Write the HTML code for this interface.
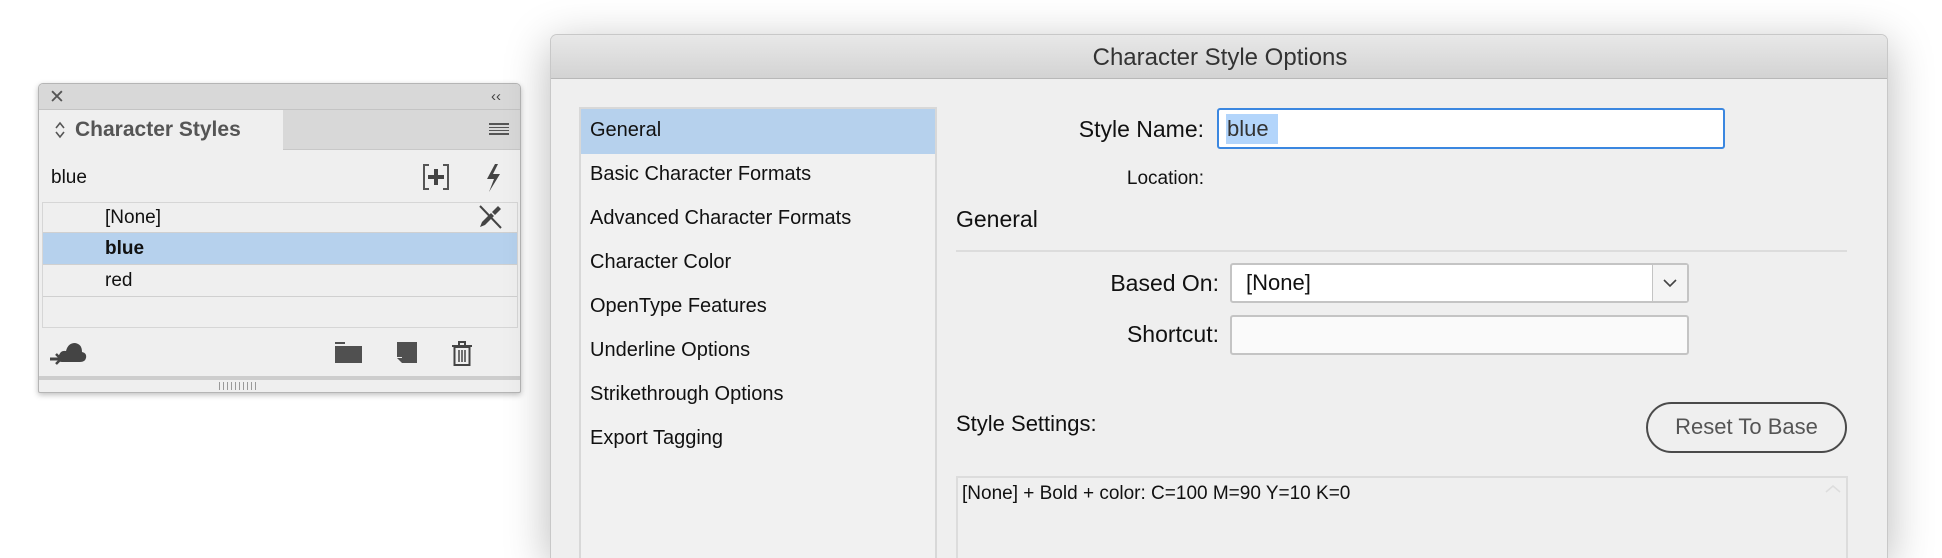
<!DOCTYPE html>
<html><head><style>
*{margin:0;padding:0;box-sizing:border-box}
body{width:1942px;height:558px;background:#fff;position:relative;overflow:hidden;font-family:"Liberation Sans",sans-serif;color:#111}
.a{position:absolute}
.t{position:absolute;white-space:nowrap;line-height:1}
</style></head><body>

<!-- Panel -->
<div class="a" style="left:38px;top:83px;width:483px;height:310px;background:#efefef;border:1px solid #b5b5b5;border-radius:5px 5px 2px 2px;box-shadow:0 2px 6px rgba(0,0,0,.25);overflow:hidden">
  <div class="a" style="left:0;top:0;width:483px;height:26px;background:#d8d8d8;border-bottom:1px solid #c4c4c4"></div>
  <div class="t" style="left:10px;top:4px;font-size:19px;color:#555">✕</div>
  <div class="t" style="left:452px;top:5px;font-size:15px;color:#444">‹‹</div>
  <div class="a" style="left:0;top:26px;width:483px;height:40px;background:#d8d8d8;border-bottom:1px solid #c8c8c8"></div>
  <div class="a" style="left:0;top:26px;width:244px;height:41px;background:#efefef"></div>
  <svg class="a" style="left:15px;top:37px" width="12" height="18"><path d="M2 7 L6 2 L10 7 M2 11 L6 16 L10 11" stroke="#555" stroke-width="1.6" fill="none"/></svg>
  <div class="t" style="left:36px;top:35px;font-size:21px;font-weight:bold;color:#555">Character Styles</div>
  <div class="a" style="left:450px;top:39px;width:20px;height:12px;border-top:2px solid #555;border-bottom:2px solid #555"></div>
  <div class="a" style="left:450px;top:43px;width:20px;height:4px;border-top:1.5px solid #555;border-bottom:1.5px solid #555"></div>
  <div class="t" style="left:12px;top:84px;font-size:19px">blue</div>
  <svg class="a" style="left:384px;top:80px" width="26" height="26"><path d="M6 1H1V25H6M20 1H25V25H20" stroke="#555" stroke-width="2" fill="none"/><path d="M13 5V21M5 13H21" stroke="#444" stroke-width="4"/></svg>
  <svg class="a" style="left:443px;top:79px" width="22" height="30"><path d="M13 1 L5 16 L12 16 L7 29 L18 11 L11 11 L16 1" fill="#444"/></svg>
  <div class="a" style="left:3px;top:118px;width:476px;height:126px;border:1px solid #d6d6d6;background:#efefef"></div>
  <div class="a" style="left:4px;top:148px;width:474px;height:1px;background:#d0d0d0"></div>
  <div class="a" style="left:4px;top:149px;width:474px;height:31px;background:#b6d1ed"></div>
  <div class="a" style="left:4px;top:180px;width:474px;height:1px;background:#d0d0d0"></div>
  <div class="a" style="left:4px;top:212px;width:474px;height:1px;background:#d0d0d0"></div>
  <div class="t" style="left:66px;top:124px;font-size:19px">[None]</div>
  <div class="t" style="left:66px;top:155px;font-size:19px;font-weight:bold">blue</div>
  <div class="t" style="left:66px;top:187px;font-size:19px">red</div>
  <svg class="a" style="left:439px;top:120px" width="24" height="26"><path d="M14 8 L20 2 L23 5 L17 11 Z M13 9 L16 12 L7 21 L2 23 L4 18 Z" fill="#444"/><path d="M2 2 L23 24" stroke="#444" stroke-width="2"/></svg>
  <div class="a" style="left:0;top:292px;width:483px;height:4px;background:#cdcdcd"></div>
  <div class="a" style="left:180px;top:298px;width:38px;height:8px;background:repeating-linear-gradient(90deg,#999 0 1px,transparent 1px 4px)"></div>
  <svg class="a" style="left:10px;top:256px" width="40" height="26"><path d="M1 19H11" stroke="#444" stroke-width="3"/><path d="M7 14L12 19L7 24" stroke="#444" stroke-width="2.5" fill="none"/><path d="M13 22 Q8 22 10 15 Q12 10 17 11 Q19 3 26 3 Q33 4 33 12 Q38 13 37 18 Q36 22 31 22 Z" fill="#444"/></svg>
  <svg class="a" style="left:296px;top:258px" width="28" height="22"><path d="M0 0H10V2H0Z M0 4H27V21H0Z" fill="#505050"/></svg>
  <svg class="a" style="left:357px;top:258px" width="22" height="22"><path d="M1 0H21V21H6V15H1Z" fill="#505050"/><path d="M1 16H6V21Z" fill="#505050"/></svg>
  <svg class="a" style="left:412px;top:257px" width="22" height="26"><path d="M1 5H21M8 5V1H14V5" stroke="#444" stroke-width="2" fill="none"/><rect x="3.5" y="6" width="15" height="18" stroke="#444" stroke-width="2" fill="none"/><path d="M8 9V21M11 9V21M14 9V21" stroke="#444" stroke-width="1.5"/></svg>
</div>

<!-- Dialog -->
<div class="a" style="left:550px;top:34px;width:1338px;height:524px;background:#efefef;border:1px solid #c8c8c8;border-bottom:none;border-radius:7px 7px 0 0;box-shadow:0 10px 45px rgba(0,0,0,.28);overflow:hidden">
  <div class="a" style="left:0;top:0;width:1338px;height:44px;background:linear-gradient(#e8e8e8,#d3d3d3);border-bottom:1px solid #b8b8b8"></div>
  <div class="t" style="left:0;width:1338px;text-align:center;top:11px;font-size:24px;color:#333">Character Style Options</div>
  <div class="a" style="left:28px;top:72px;width:358px;height:500px;background:#f1f1f1;border:2px solid #d8d8d8"></div>
  <div class="a" style="left:30px;top:74px;width:354px;height:45px;background:#b6d1ed"></div>
  <div class="a" style="left:405px;top:441px;width:892px;height:100px;border:2px solid #dcdcdc;background:#efefef"></div>
</div>
<div class="t" style="left:590px;top:120px;font-size:20px">General</div>
<div class="t" style="left:590px;top:164px;font-size:20px">Basic Character Formats</div>
<div class="t" style="left:590px;top:208px;font-size:20px">Advanced Character Formats</div>
<div class="t" style="left:590px;top:252px;font-size:20px">Character Color</div>
<div class="t" style="left:590px;top:296px;font-size:20px">OpenType Features</div>
<div class="t" style="left:590px;top:340px;font-size:20px">Underline Options</div>
<div class="t" style="left:590px;top:384px;font-size:20px">Strikethrough Options</div>
<div class="t" style="left:590px;top:428px;font-size:20px">Export Tagging</div>

<div class="t" style="left:1000px;width:204px;text-align:right;top:118px;font-size:23px">Style Name:</div>
<div class="a" style="left:1217px;top:108px;width:508px;height:41px;background:#fff;border:2px solid #3b87e0;border-radius:3px"></div>
<div class="a" style="left:1226px;top:114px;width:52px;height:30px;background:#b3d5fb"></div>
<div class="t" style="left:1227px;top:118px;font-size:22px;color:#333">blue</div>
<div class="t" style="left:1000px;width:204px;text-align:right;top:169px;font-size:19px">Location:</div>
<div class="t" style="left:956px;top:208px;font-size:23px">General</div>
<div class="a" style="left:956px;top:250px;width:891px;height:2px;background:#dcdcdc"></div>
<div class="t" style="left:1000px;width:219px;text-align:right;top:272px;font-size:23px">Based On:</div>
<div class="a" style="left:1230px;top:263px;width:459px;height:40px;background:#fff;border:2px solid #c4c4c4;border-radius:3px"></div>
<div class="a" style="left:1652px;top:265px;width:35px;height:36px;background:#f4f4f4;border-left:1px solid #c4c4c4"></div>
<svg class="a" style="left:1663px;top:278px" width="14" height="10"><path d="M1 2L7 8L13 2" stroke="#444" stroke-width="1.6" fill="none"/></svg>
<div class="t" style="left:1246px;top:272px;font-size:22px">[None]</div>
<div class="t" style="left:1000px;width:219px;text-align:right;top:323px;font-size:23px">Shortcut:</div>
<div class="a" style="left:1230px;top:315px;width:459px;height:40px;background:#fafafa;border:2px solid #c4c4c4;border-radius:3px"></div>
<div class="t" style="left:956px;top:413px;font-size:22px">Style Settings:</div>
<div class="a" style="left:1646px;top:402px;width:201px;height:51px;border:2px solid #4a4a4a;border-radius:26px"></div>
<div class="t" style="left:1646px;width:201px;text-align:center;top:416px;font-size:22px;color:#555">Reset To Base</div>
<div class="t" style="left:962px;top:484px;font-size:19px">[None] + Bold + color: C=100 M=90 Y=10 K=0</div>
<svg class="a" style="left:1825px;top:484px" width="16" height="10"><path d="M1 8L8 2L15 8" stroke="#ddd" stroke-width="1.5" fill="none"/></svg>
</body></html>
